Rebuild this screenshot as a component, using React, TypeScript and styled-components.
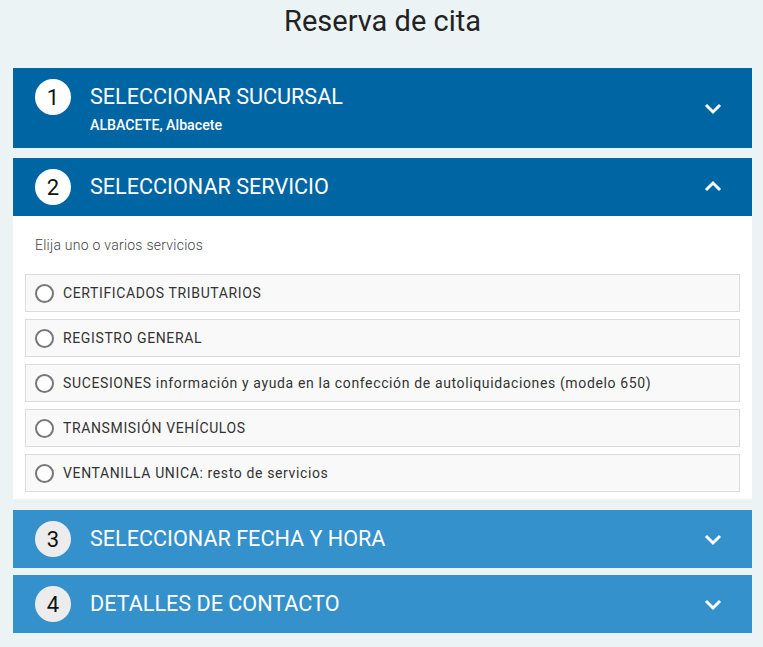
import React from "react";
import styled, { createGlobalStyle } from "styled-components";

const Global = createGlobalStyle`
  html, body { margin: 0; padding: 0; background: #ecf3f5; }
  body { font-family: Roboto, "Liberation Sans", Arial, sans-serif; }
`;

const Page = styled.div`
  padding: 0 11px 14px 13px;
  display: flex;
  flex-direction: column;
`;

const Title = styled.h1`
  margin: 0;
  height: 42px;
  line-height: 42px;
  text-align: center;
  font-size: 29px;
  font-weight: 400;
  color: #222;
  margin-bottom: 26px;
`;

const Panel = styled.section<{ $gap: number }>`
  display: flex;
  flex-direction: column;
  margin-bottom: ${(p) => p.$gap}px;
`;

const Header = styled.div<{ $active: boolean; $tall?: boolean }>`
  display: flex;
  align-items: ${(p) => (p.$tall ? "flex-start" : "center")};
  height: ${(p) => (p.$tall ? 80 : 58)}px;
  box-sizing: border-box;
  padding: ${(p) => (p.$tall ? "11px 0 0 22px" : "0 0 0 22px")};
  background: ${(p) => (p.$active ? "#0065a3" : "#3591cb")};
  color: #fff;
`;

const Num = styled.div<{ $active: boolean }>`
  width: 36px;
  height: 36px;
  border-radius: 50%;
  background: ${(p) => (p.$active ? "#fff" : "#ececec")};
  color: #111;
  display: flex;
  align-items: center;
  justify-content: center;
  font-size: 22px;
  flex: none;
`;

const HeadText = styled.div`
  flex: 1;
  margin-left: 19px;
  display: flex;
  flex-direction: column;
`;

const HeadTitle = styled.div`
  font-size: 21.6px;
  line-height: 36px;
  font-weight: 400;
`;

const HeadSub = styled.div`
  font-size: 14.2px;
  font-weight: 500;
  line-height: 18px;
  margin-top: 1px;
`;

const Chevron = styled.svg<{ $tall?: boolean }>`
  width: 18px;
  height: 18px;
  margin-right: 30px;
  margin-top: ${(p) => (p.$tall ? "20px" : "0")};
  flex: none;
`;

const Body = styled.div`
  background: #fff;
  padding: 19px 12px 7px 12px;
  display: flex;
  flex-direction: column;
  gap: 7px;
`;

const Hint = styled.div`
  font-size: 14px;
  font-weight: 300;
  letter-spacing: 0.25px;
  color: #444;
  margin: 0 0 12px 10px;
  line-height: 20px;
`;

const Option = styled.label`
  display: flex;
  align-items: center;
  height: 38px;
  box-sizing: border-box;
  border: 1px solid #dcdcdc;
  background: #f9f9f9;
  padding-left: 9px;
  font-size: 14px;
  letter-spacing: 0.63px;
  color: #333;
`;

const Radio = styled.span`
  width: 15px;
  height: 15px;
  border: 2px solid #777;
  border-radius: 50%;
  background: #fff;
  margin-right: 9px;
  flex: none;
`;

const Arrow = ({ up, tall }: { up?: boolean; tall?: boolean }) => (
  <Chevron $tall={tall} viewBox="0 0 18 18">
    <polyline
      points={up ? "2,12 9,5 16,12" : "2,6 9,13 16,6"}
      fill="none"
      stroke="#fff"
      strokeWidth="3"
    />
  </Chevron>
);

const services = [
  "CERTIFICADOS TRIBUTARIOS",
  "REGISTRO GENERAL",
  "SUCESIONES información y ayuda en la confección de autoliquidaciones (modelo 650)",
  "TRANSMISIÓN VEHÍCULOS",
  "VENTANILLA UNICA: resto de servicios",
];

export default function App() {
  return (
    <>
      <Global />
      <Page>
        <Title>Reserva de cita</Title>
        <Panel $gap={10}>
          <Header $active $tall>
            <Num $active>1</Num>
            <HeadText>
              <HeadTitle>SELECCIONAR SUCURSAL</HeadTitle>
              <HeadSub>ALBACETE, Albacete</HeadSub>
            </HeadText>
            <Arrow tall />
          </Header>
        </Panel>
        <Panel $gap={11}>
          <Header $active>
            <Num $active>2</Num>
            <HeadText>
              <HeadTitle>SELECCIONAR SERVICIO</HeadTitle>
            </HeadText>
            <Arrow up />
          </Header>
          <Body>
            <Hint>Elija uno o varios servicios</Hint>
            {services.map((s) => (
              <Option key={s}>
                <Radio />
                {s}
              </Option>
            ))}
          </Body>
        </Panel>
        <Panel $gap={7}>
          <Header $active={false}>
            <Num $active={false}>3</Num>
            <HeadText>
              <HeadTitle>SELECCIONAR FECHA Y HORA</HeadTitle>
            </HeadText>
            <Arrow />
          </Header>
        </Panel>
        <Panel $gap={0}>
          <Header $active={false}>
            <Num $active={false}>4</Num>
            <HeadText>
              <HeadTitle>DETALLES DE CONTACTO</HeadTitle>
            </HeadText>
            <Arrow />
          </Header>
        </Panel>
      </Page>
    </>
  );
}
